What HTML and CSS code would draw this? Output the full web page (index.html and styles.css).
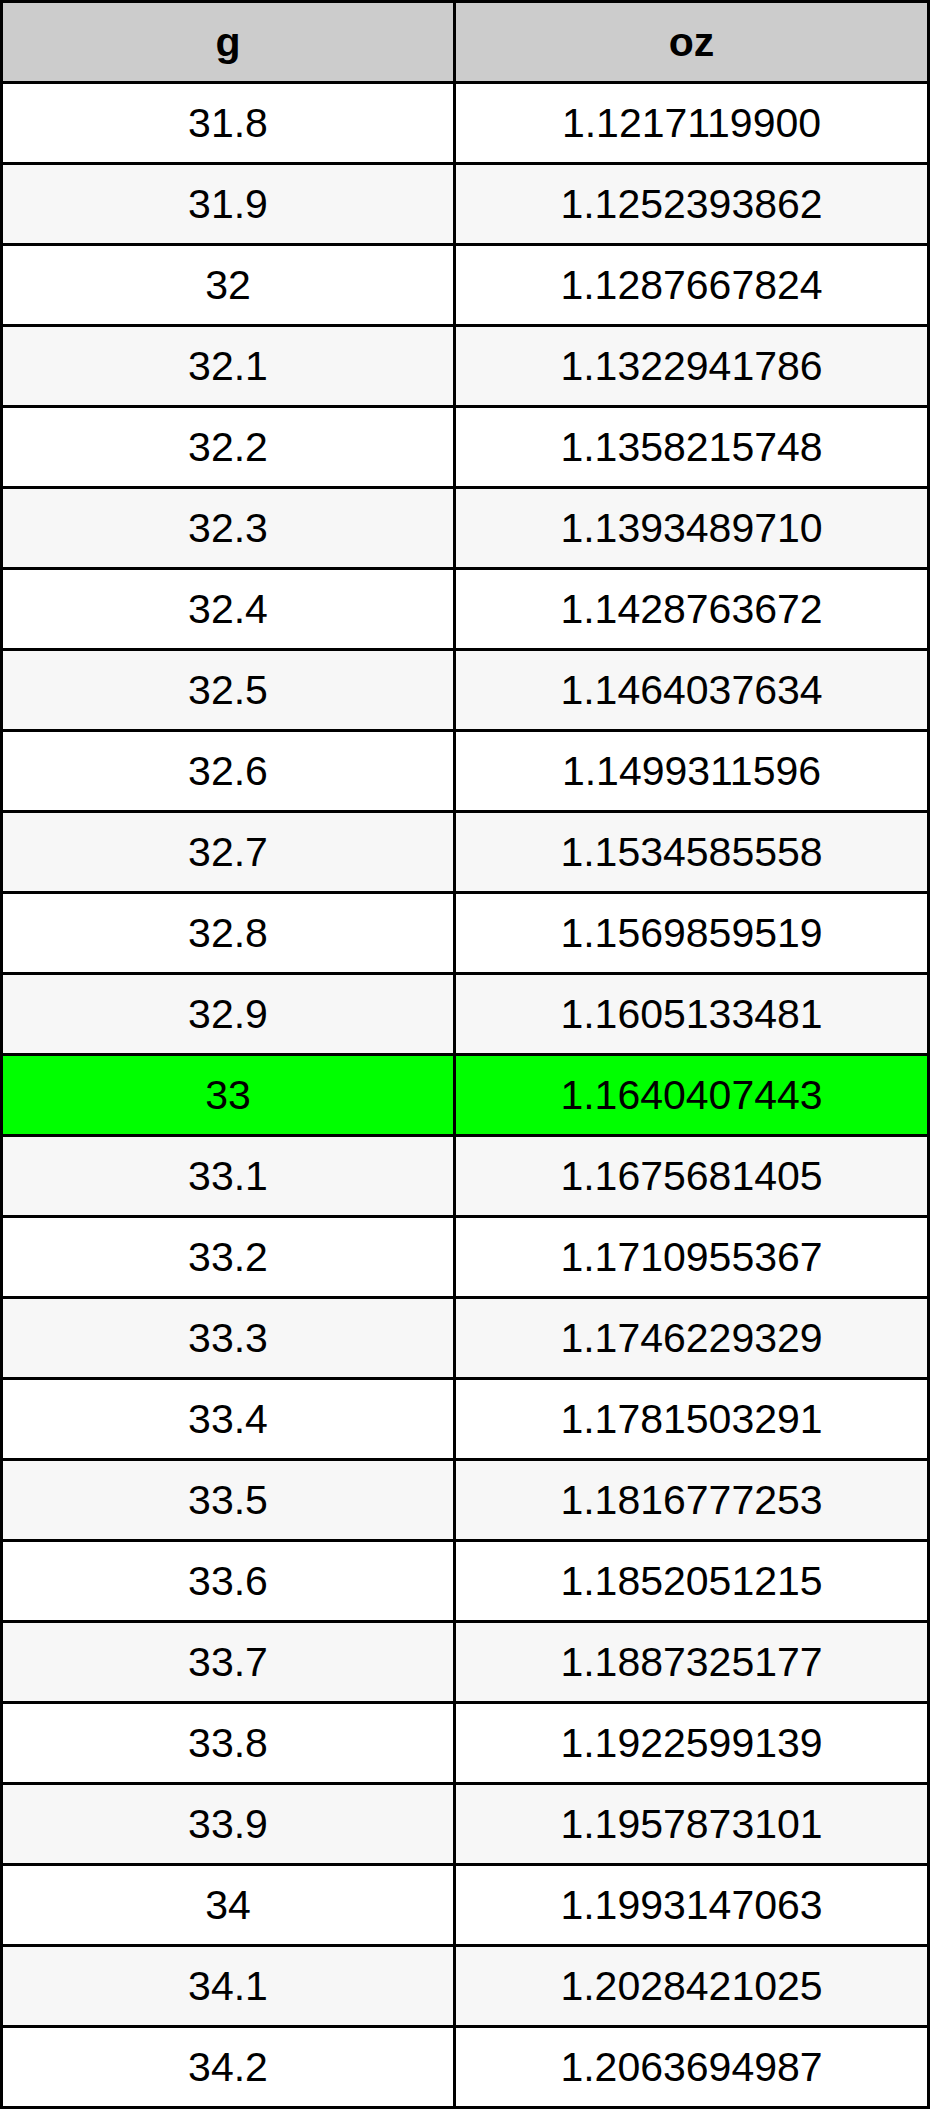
FILE: index.html
```html
<!DOCTYPE html>
<html>
<head>
<meta charset="utf-8">
<link rel="stylesheet" href="styles.css">
</head>
<body>
<div class="table">
  <div class="cell head">g</div><div class="cell head">oz</div>
  <div class="cell">31.8</div><div class="cell">1.1217119900</div>
  <div class="cell alt">31.9</div><div class="cell alt">1.1252393862</div>
  <div class="cell">32</div><div class="cell">1.1287667824</div>
  <div class="cell alt">32.1</div><div class="cell alt">1.1322941786</div>
  <div class="cell">32.2</div><div class="cell">1.1358215748</div>
  <div class="cell alt">32.3</div><div class="cell alt">1.1393489710</div>
  <div class="cell">32.4</div><div class="cell">1.1428763672</div>
  <div class="cell alt">32.5</div><div class="cell alt">1.1464037634</div>
  <div class="cell">32.6</div><div class="cell">1.1499311596</div>
  <div class="cell alt">32.7</div><div class="cell alt">1.1534585558</div>
  <div class="cell">32.8</div><div class="cell">1.1569859519</div>
  <div class="cell alt">32.9</div><div class="cell alt">1.1605133481</div>
  <div class="cell hl">33</div><div class="cell hl">1.1640407443</div>
  <div class="cell alt">33.1</div><div class="cell alt">1.1675681405</div>
  <div class="cell">33.2</div><div class="cell">1.1710955367</div>
  <div class="cell alt">33.3</div><div class="cell alt">1.1746229329</div>
  <div class="cell">33.4</div><div class="cell">1.1781503291</div>
  <div class="cell alt">33.5</div><div class="cell alt">1.1816777253</div>
  <div class="cell">33.6</div><div class="cell">1.1852051215</div>
  <div class="cell alt">33.7</div><div class="cell alt">1.1887325177</div>
  <div class="cell">33.8</div><div class="cell">1.1922599139</div>
  <div class="cell alt">33.9</div><div class="cell alt">1.1957873101</div>
  <div class="cell">34</div><div class="cell">1.1993147063</div>
  <div class="cell alt">34.1</div><div class="cell alt">1.2028421025</div>
  <div class="cell">34.2</div><div class="cell">1.2063694987</div>
</div>
</body>
</html>
```
FILE: styles.css
```css
html, body {
  margin: 0;
  padding: 0;
  background: #ffffff;
}
.table {
  display: grid;
  grid-template-columns: 450px 471px;
  grid-auto-rows: 78px;
  gap: 3px;
  padding: 3px;
  width: 930px;
  box-sizing: border-box;
  background: #000000;
  font-family: "Liberation Sans", Arial, sans-serif;
  font-size: 41px;
  color: #000000;
}
.cell {
  display: flex;
  align-items: center;
  justify-content: center;
  background: #ffffff;
  line-height: 1;
}
.cell.alt {
  background: #f7f7f7;
}
.cell.head {
  background: #cccccc;
  font-weight: bold;
}
.cell.hl {
  background: #00ff00;
}
```
